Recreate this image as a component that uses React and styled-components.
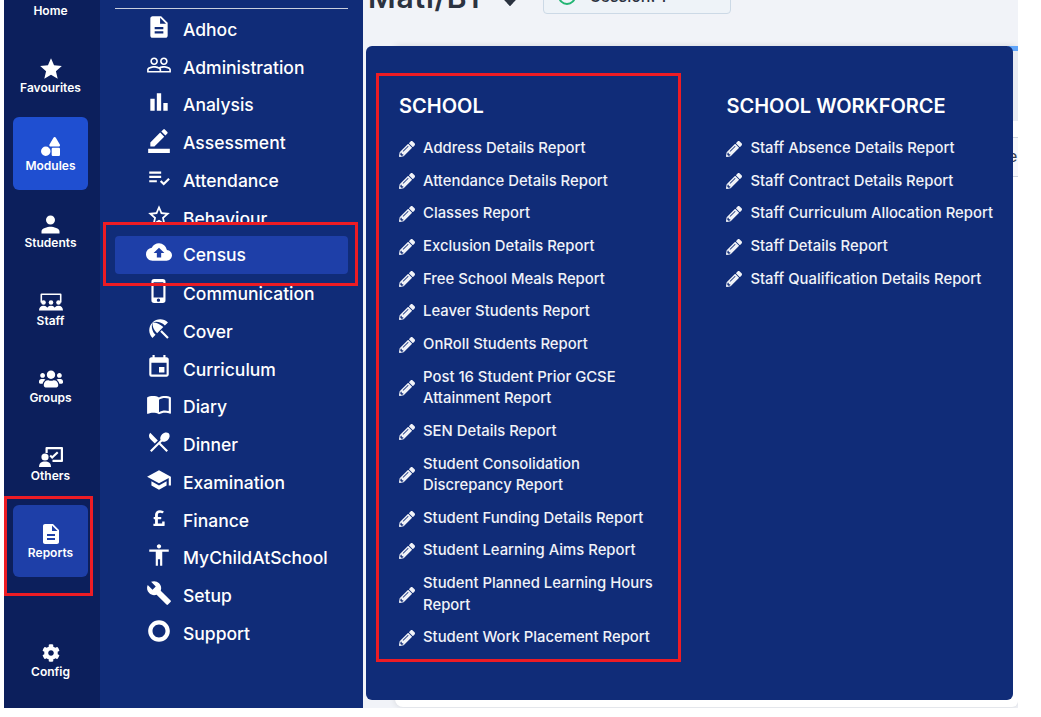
import React from "react";
import styled, { createGlobalStyle } from "styled-components";
import {
  MdDescription,
  MdPeopleOutline,
  MdBarChart,
  MdBorderColor,
  MdPlaylistAddCheck,
  MdStarBorder,
  MdCloudUpload,
  MdPhoneIphone,
  MdBeachAccess,
  MdEvent,
  MdImportContacts,
  MdRestaurantMenu,
  MdSchool,
  MdAccessibility,
  MdBuild,
  MdTripOrigin,
  MdStar,
  MdPerson,
  MdHome,
} from "react-icons/md";
import { FaShapes, FaUsers, FaCog, FaPencilAlt, FaPoundSign } from "react-icons/fa";

const GlobalStyle = createGlobalStyle`
  html, body {
    margin: 0;
    padding: 0;
    background: #fff;
    overflow: hidden;
  }
  body {
    font-family: Inter, "Liberation Sans", sans-serif;
  }
`;

const StaffIcon = (props) => (
  <svg viewBox="0 0 24 17" fill="currentColor" {...props}>
    <path d="M2.500 0H21.500a1 1 0 0 1 1 1v8h-1.600V1.600H3.100V9H1.500V1a1 1 0 0 1 1-1z" />
    <circle cx="4.500" cy="9" r="2.300" />
    <circle cx="12" cy="9" r="2.300" />
    <circle cx="19.500" cy="9" r="2.300" />
    <path d="M0 17c0-3 1.800-4.700 4.500-4.700S9 14 9 17zM7.500 17c0-3 1.800-4.700 4.500-4.700s4.500 1.700 4.500 4.700zM15 17c0-3 1.800-4.700 4.500-4.700S24 14 24 17z" />
  </svg>
);

const OthersIcon = (props) => (
  <svg viewBox="0 0 24 20" fill="currentColor" {...props}>
    <path d="M7.500 0H23a1 1 0 0 1 1 1v13a1 1 0 0 1-1 1H13.500v-2.200h8.300V2.200H8.700V6H6.500V1a1 1 0 0 1 1-1z" />
    <path d="M10.500 9.300l2.600 2.600L19.500 6l-1.500-1.500-4.900 4.500-1.200-1.200z" />
    <circle cx="6" cy="10" r="3.600" />
    <path d="M0 20c0-3.800 2.400-5.500 6-5.500s6 1.700 6 5.500z" />
  </svg>
);

const railItems = [
  { label: "Home", icon: MdHome, size: 24 },
  { label: "Favourites", icon: MdStar, size: 26 },
  { label: "Modules", icon: FaShapes, size: 19, active: "#1f4fd1" },
  { label: "Students", icon: MdPerson, size: 27 },
  { label: "Staff", icon: StaffIcon, size: 24 },
  { label: "Groups", icon: FaUsers, size: 24 },
  { label: "Others", icon: OthersIcon, size: 24 },
  { label: "Reports", icon: MdDescription, size: 24, active: "#1e3fa8" },
];

const menuItems = [
  { label: "Adhoc", icon: MdDescription },
  { label: "Administration", icon: MdPeopleOutline },
  { label: "Analysis", icon: MdBarChart },
  { label: "Assessment", icon: MdBorderColor },
  { label: "Attendance", icon: MdPlaylistAddCheck },
  { label: "Behaviour", icon: MdStarBorder },
  { label: "Census", icon: MdCloudUpload, active: true },
  { label: "Communication", icon: MdPhoneIphone },
  { label: "Cover", icon: MdBeachAccess },
  { label: "Curriculum", icon: MdEvent },
  { label: "Diary", icon: MdImportContacts },
  { label: "Dinner", icon: MdRestaurantMenu },
  { label: "Examination", icon: MdSchool },
  { label: "Finance", icon: FaPoundSign, inset: 4 },
  { label: "MyChildAtSchool", icon: MdAccessibility },
  { label: "Setup", icon: MdBuild },
  { label: "Support", icon: MdTripOrigin },
];

const schoolReports = [
  "Address Details Report",
  "Attendance Details Report",
  "Classes Report",
  "Exclusion Details Report",
  "Free School Meals Report",
  "Leaver Students Report",
  "OnRoll Students Report",
  "Post 16 Student Prior GCSE Attainment Report",
  "SEN Details Report",
  "Student Consolidation Discrepancy Report",
  "Student Funding Details Report",
  "Student Learning Aims Report",
  "Student Planned Learning Hours Report",
  "Student Work Placement Report",
];

const workforceReports = [
  "Staff Absence Details Report",
  "Staff Contract Details Report",
  "Staff Curriculum Allocation Report",
  "Staff Details Report",
  "Staff Qualification Details Report",
];

const Page = styled.div`
  position: relative;
  display: flex;
  width: 1041px;
  height: 708px;
  padding-left: 4px;
  box-sizing: border-box;
  overflow: hidden;
`;

const Rail = styled.nav`
  flex: 0 0 96px;
  display: flex;
  flex-direction: column;
  background: #0c1f5c;
`;

const RailList = styled.div`
  display: flex;
  flex-direction: column;
  margin-top: -38px;
`;

const RailItem = styled.div`
  width: 75px;
  height: 72.500px;
  margin: 0 0 5px 9px;
  padding-top: 18.500px;
  box-sizing: border-box;
  display: flex;
  flex-direction: column;
  align-items: center;
  border-radius: 6px;
  background: ${(p) => p.$active || "transparent"};
  color: #fff;
  font-size: 12px;
  font-weight: 600;
  line-height: 15px;
`;

const RailIcon = styled.span`
  flex: none;
  height: 22px;
  display: flex;
  align-items: center;
  justify-content: center;
  svg {
    display: block;
    flex: none;
    width: ${(p) => p.$size}px;
    height: ${(p) => p.$size}px;
  }
`;

const ConfigItem = styled(RailItem)`
  margin-top: 41px;
`;

const Sidebar = styled.aside`
  flex: 0 0 263px;
  background: #102c78;
  padding: 8px 15px 0;
  box-sizing: border-box;
`;

const Rule = styled.div`
  height: 1px;
  background: #c9cfdd;
`;

const Menu = styled.div`
  display: flex;
  flex-direction: column;
  margin-top: 0.500px;
`;

const MenuItem = styled.div`
  position: relative;
  height: 37.750px;
  box-sizing: border-box;
  display: flex;
  align-items: center;
  gap: 11px;
  padding-left: 31px;
  padding-top: ${(p) => (p.$active ? "0" : "2px")};
  border-radius: 4px;
  color: #fff;
  font-size: 17.500px;
  font-weight: 500;
  background: ${(p) => (p.$active ? "#1e3fa8" : "transparent")};
  box-shadow: ${(p) => (p.$active ? "0 -12px 0 #102c78" : "none")};
  svg {
    flex: none;
    width: 26px;
    height: 26px;
    padding: ${(p) => p.$inset || 0}px;
    box-sizing: border-box;
    margin-top: -5px;
  }
`;

const Main = styled.main`
  position: relative;
  flex: 0 0 655px;
  background: #f1f3f8;
  overflow: hidden;
`;

const TopBar = styled.header`
  display: flex;
  align-items: center;
  height: 14px;
  padding-left: 5px;
  gap: 16px;
  color: #2b3240;
`;

const Title = styled.div`
  font-size: 30px;
  font-weight: 600;
  line-height: 30px;
  margin-top: -20px;
  letter-spacing: 0.800px;
`;

const Chevron = styled.div`
  flex: none;
  width: 14px;
  height: 14px;
  box-sizing: border-box;
  margin: -22px 0 0 1px;
  border-right: 4px solid #2b3240;
  border-bottom: 4px solid #2b3240;
  transform: rotate(45deg);
`;

const Session = styled.div`
  display: flex;
  align-items: center;
  gap: 14px;
  width: 188px;
  height: 30px;
  margin: -16px 0 0 10px;
  padding: 0 0 6px 14px;
  box-sizing: border-box;
  background: #eef3f8;
  border: 1px solid #ccd9e6;
  border-radius: 4px;
  font-size: 16px;
  font-weight: 500;
  white-space: nowrap;
  overflow: hidden;
`;

const SessionDot = styled.span`
  flex: none;
  width: 18px;
  height: 18px;
  box-sizing: border-box;
  border: 2px solid #22b573;
  border-radius: 50%;
`;

const BackCard = styled.div`
  position: absolute;
  left: 32px;
  right: 0;
  top: 46px;
  bottom: 1px;
  background: #fff;
  border-radius: 0 6px 6px 8px;
  box-shadow: 0 0 6px rgba(0, 0, 0, 0.12);
`;

const SideStrip = styled.div`
  position: absolute;
  right: 0;
  top: 46px;
  width: 10px;
  height: 75px;
  background: #e8ebf2;
  border-top: 5px solid #60a5fa;
  box-sizing: border-box;
`;

const TableEdge = styled.div`
  position: absolute;
  right: 0;
  top: 137px;
  width: 10px;
  height: 40px;
  box-sizing: border-box;
  background: #f7f8fb;
  border-top: 1px solid #cfd5df;
  border-bottom: 1px solid #cfd5df;
  font-size: 16px;
  line-height: 36px;
  color: #3a4150;
  overflow: hidden;
`;

const Panel = styled.section`
  position: absolute;
  left: 3px;
  top: 46px;
  width: 647px;
  height: 654px;
  display: flex;
  padding: 47px 0 0 33px;
  box-sizing: border-box;
  background: #102c78;
  border-radius: 6px;
  color: #fff;
`;

const Column = styled.div`
  flex: 0 0 ${(p) => p.$width};
  display: flex;
  flex-direction: column;
`;

const Heading = styled.h2`
  margin: 0 0 13.300px;
  font-size: 20px;
  font-weight: 600;
  line-height: 26px;
`;

const ReportRow = styled.div`
  display: flex;
  align-items: center;
  gap: 8px;
  padding: 5.600px 0;
  font-size: 14.850px;
  font-weight: 500;
  line-height: 21.500px;
  color: #f1f3f8;
  svg {
    flex: none;
    width: 16px;
    height: 16px;
  }
  span {
    max-width: ${(p) => p.$textWidth};
  }
`;

// red frames drawn on top of the screenshot
const Annotation = styled.div`
  position: absolute;
  left: ${(p) => p.$x}px;
  top: ${(p) => p.$y}px;
  width: ${(p) => p.$w}px;
  height: ${(p) => p.$h}px;
  box-sizing: border-box;
  border: 3px solid #ed1c24;
  pointer-events: none;
`;

function ReportList({ title, reports, textWidth }) {
  return (
    <>
      <Heading>{title}</Heading>
      {reports.map((r) => (
        <ReportRow key={r} $textWidth={textWidth}>
          <FaPencilAlt />
          <span>{r}</span>
        </ReportRow>
      ))}
    </>
  );
}

export default function App() {
  return (
    <Page>
      <GlobalStyle />
      <Rail>
        <RailList>
          {railItems.map(({ label, icon: Icon, active, size }) => (
            <RailItem key={label} $active={active}>
              <RailIcon $size={size}>
                <Icon />
              </RailIcon>
              {label}
            </RailItem>
          ))}
          <ConfigItem>
            <RailIcon $size={18}>
              <FaCog />
            </RailIcon>
            Config
          </ConfigItem>
        </RailList>
      </Rail>
      <Sidebar>
        <Rule />
        <Menu>
          {menuItems.map(({ label, icon: Icon, active, inset }) => (
            <MenuItem key={label} $active={active} $inset={inset}>
              <Icon />
              {label}
            </MenuItem>
          ))}
        </Menu>
      </Sidebar>
      <Main>
        <TopBar>
          <Title>Mati/BT</Title>
          <Chevron />
          <Session>
            <SessionDot />
            Session: 1
          </Session>
        </TopBar>
        <BackCard />
        <SideStrip />
        <TableEdge>e</TableEdge>
        <Panel>
          <Column $width="327.400px">
            <ReportList title="SCHOOL" reports={schoolReports} textWidth="236px" />
          </Column>
          <Column $width="280px">
            <ReportList title="SCHOOL WORKFORCE" reports={workforceReports} textWidth="none" />
          </Column>
        </Panel>
      </Main>
      <Annotation $x={4} $y={496} $w={89} $h={100} />
      <Annotation $x={103} $y={222} $w={255} $h={64} />
      <Annotation $x={376} $y={73} $w={305} $h={589} />
    </Page>
  );
}
